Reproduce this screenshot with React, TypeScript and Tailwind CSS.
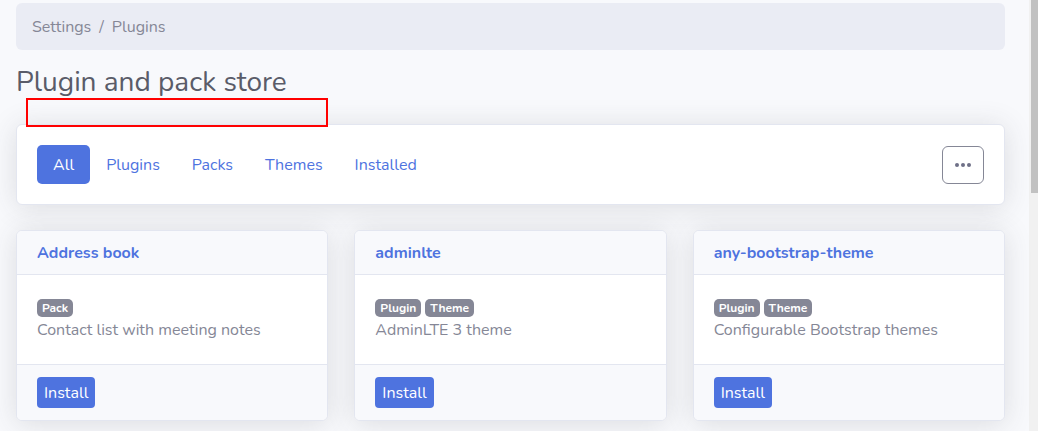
import React from "react";

const font = { fontFamily: '"Nunito", "Open Sans", "Noto Sans", sans-serif' };

function Badge({ children }: { children: React.ReactNode }) {
  return (
    <span className="inline-flex h-[18px] items-center rounded-[5px] bg-[#858796] px-[5px] text-[12px] font-bold leading-none text-white">
      {children}
    </span>
  );
}

function PluginCard({ title, badges, desc }: { title: string; badges: string[]; desc: string }) {
  return (
    <div className="flex flex-col overflow-hidden rounded-[6px] border border-[#e3e6f0] bg-white shadow-[0_0.15rem_1.75rem_0_rgba(58,59,69,0.15)]">
      <div className="flex h-[44px] items-center border-b border-[#e3e6f0] bg-[#f8f9fc] px-5">
        <span className="text-[16px] font-bold text-[#4e73df]">{title}</span>
      </div>
      <div className="flex h-[89px] flex-col px-5 pt-[24px]">
        <div className="flex gap-[4px]">
          {badges.map((b) => (
            <Badge key={b}>{b}</Badge>
          ))}
        </div>
        <div className="mt-[1px] text-[16px] leading-[24px] text-[#858796]">{desc}</div>
      </div>
      <div className="flex h-[56px] items-center border-t border-[#e3e6f0] bg-[#f8f9fc] px-5">
        <button className="h-[31px] rounded-[4px] bg-[#4e73df] px-[7px] text-[16px] text-white">Install</button>
      </div>
    </div>
  );
}

export default function App() {
  return (
    <div className="flex h-[431px] w-[1038px] overflow-hidden bg-[#f8f9fc]" style={font}>
      <div className="relative flex-1 pl-4 pr-6 pt-[3px]">
        <div className="flex h-[47px] items-center rounded-[6px] bg-[#eaecf4] px-4 pt-[1px] text-[16px] text-[#858796]">
          <span>Settings</span>
          <span className="px-[8px]">/</span>
          <span>Plugins</span>
        </div>
        <h1 className="mt-[14px] h-[36px] text-[28px] leading-[36px] text-[#5a5c69]">Plugin and pack store</h1>
        <div className="mt-[24px] flex h-[81px] items-center justify-between rounded-[6px] border border-[#e3e6f0] bg-white px-5 shadow-[0_0.15rem_1.75rem_0_rgba(58,59,69,0.15)]">
          <div className="flex items-center">
            <button className="h-[39px] rounded-[5px] bg-[#4e73df] px-4 text-[16px] text-white">All</button>
            <button className="h-[39px] px-4 text-[16px] text-[#4e73df]">Plugins</button>
            <button className="h-[39px] px-4 text-[16px] text-[#4e73df]">Packs</button>
            <button className="h-[39px] px-4 text-[16px] text-[#4e73df]">Themes</button>
            <button className="h-[39px] px-4 text-[16px] text-[#4e73df]">Installed</button>
          </div>
          <button className="flex h-[38px] w-[42px] items-center justify-center gap-[2px] rounded-[6px] border border-[#858796]">
            <span className="h-[4px] w-[4px] rounded-full bg-[#6e7087]" />
            <span className="h-[4px] w-[4px] rounded-full bg-[#6e7087]" />
            <span className="h-[4px] w-[4px] rounded-full bg-[#6e7087]" />
          </button>
        </div>
        <div className="mt-[25px] grid grid-cols-3 gap-[26px]">
          <PluginCard title="Address book" badges={["Pack"]} desc="Contact list with meeting notes" />
          <PluginCard title="adminlte" badges={["Plugin", "Theme"]} desc="AdminLTE 3 theme" />
          <PluginCard title="any-bootstrap-theme" badges={["Plugin", "Theme"]} desc="Configurable Bootstrap themes" />
        </div>
        <div className="absolute left-[26px] top-[98px] h-[29px] w-[302px] border-2 border-[#ff0000]" />
      </div>
      <div className="flex w-[9px] flex-col bg-[#f1f1f1] pl-[2px]">
        <div className="h-[193px] w-[7px] bg-[#c1c1c1]" />
      </div>
    </div>
  );
}
